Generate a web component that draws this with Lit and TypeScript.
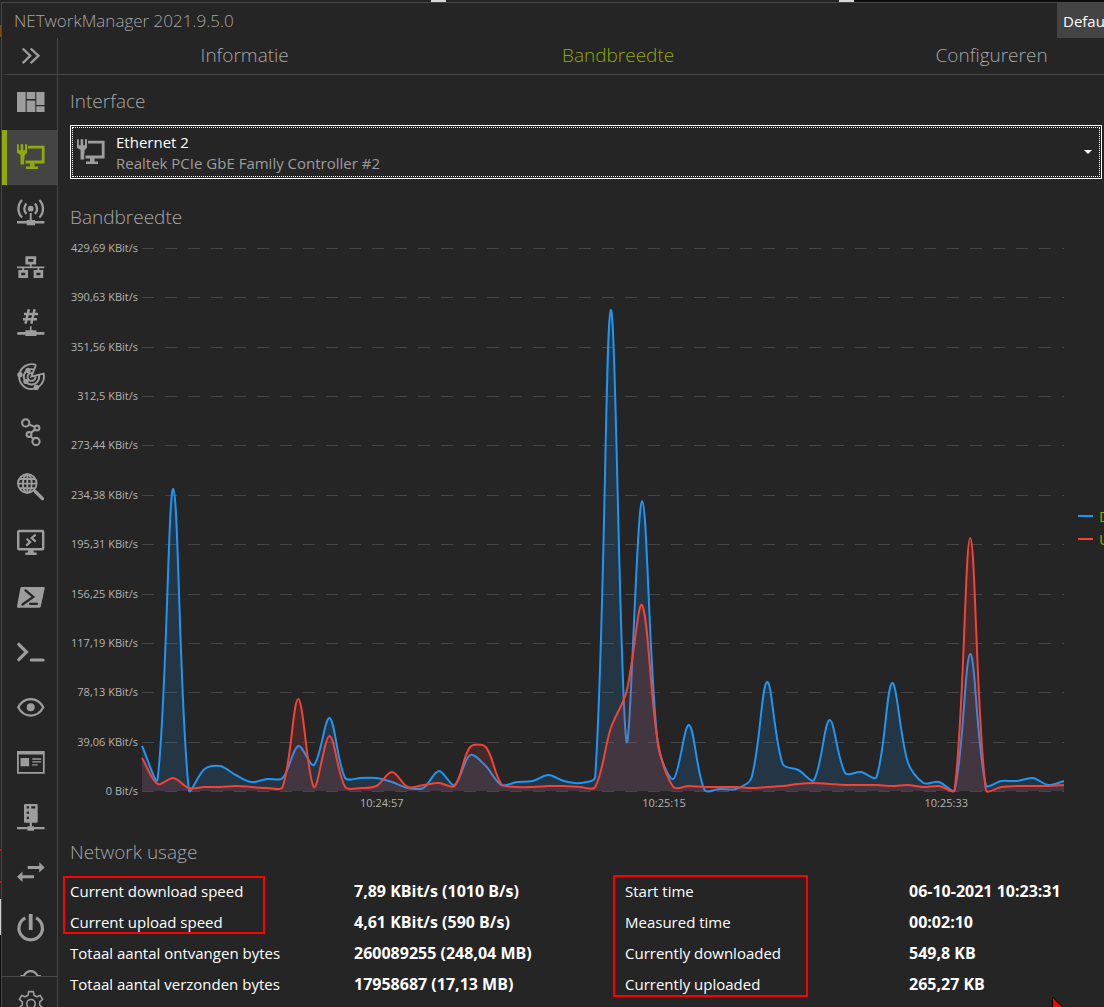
import { LitElement, html, css, svg, SVGTemplateResult } from "lit";
import { customElement, property } from "lit/decorators.js";

type Point = [number, number];

const PLOT_WIDTH = 922;
const PLOT_HEIGHT = 543;
const GRID_LABELS = [
  "429,69 KBit/s", "390,63 KBit/s", "351,56 KBit/s", "312,5 KBit/s",
  "273,44 KBit/s", "234,38 KBit/s", "195,31 KBit/s", "156,25 KBit/s",
  "117,19 KBit/s", "78,13 KBit/s", "39,06 KBit/s", "0 Bit/s",
];
const TIME_LABELS = ["10:24:57", "10:25:15", "10:25:33"];

// Samples, as height above the baseline in plot units.
const DOWNLOAD = [
  45, 12, 302, 1, 22, 25, 16, 9, 12, 13, 45, 26, 73, 13, 13, 13, 9, 3, 3, 20,
  6, 36, 25, 6, 9, 10, 16, 10, 8, 14, 481, 50, 290, 48, 12, 66, 1, 2, 2, 13,
  109, 27, 21, 11, 71, 18, 19, 14, 108, 29, 8, 9, 1, 137, 6, 10, 10, 13, 6, 10,
];
const UPLOAD = [
  33, 7, 13, 3, 4, 4, 5, 4, 3, 4, 92, 4, 55, 4, 3, 5, 19, 4, 6, 8,
  5, 44, 44, 7, 4, 4, 5, 5, 4, 4, 63, 99, 186, 50, 4, 5, 4, 4, 4, 3,
  4, 5, 7, 8, 7, 6, 6, 6, 5, 6, 4, 5, 1, 253, 1, 4, 5, 5, 5, 6,
];

function toPoints(values: number[]): Point[] {
  const step = PLOT_WIDTH / (values.length - 1);
  return values.map((v, i) => [i * step, PLOT_HEIGHT - v]);
}

// Smooth line through all points; handles follow the neighbouring segments.
function smoothPath(points: Point[], smoothness = 0.65): string {
  const at = (i: number) => points[Math.max(0, Math.min(points.length - 1, i))];
  const mid = (a: Point, b: Point): Point => [(a[0] + b[0]) / 2, (a[1] + b[1]) / 2];
  const dist = (a: Point, b: Point) => Math.hypot(b[0] - a[0], b[1] - a[1]);
  let d = `M${points[0][0]},${points[0][1]}`;
  for (let i = 0; i < points.length - 1; i++) {
    const p0 = at(i - 1), p1 = at(i), p2 = at(i + 1), p3 = at(i + 2);
    const c1 = mid(p0, p1), c2 = mid(p1, p2), c3 = mid(p2, p3);
    const l1 = dist(p0, p1), l2 = dist(p1, p2), l3 = dist(p2, p3);
    const k1 = l1 / (l1 + l2), k2 = l2 / (l2 + l3);
    const handle = (p: Point, a: Point, b: Point, k: number): Point => {
      const m: Point = [a[0] + (b[0] - a[0]) * k, a[1] + (b[1] - a[1]) * k];
      return [p[0] + (c2[0] - m[0]) * smoothness, p[1] + (c2[1] - m[1]) * smoothness];
    };
    const h1 = handle(p1, c1, c2, k1);
    const h2 = handle(p2, c2, c3, k2);
    d += ` C${[...h1, ...h2, ...p2].map((n) => n.toFixed(2)).join(",")}`;
  }
  return d;
}

const ETHERNET = svg`
  <path class="f" d="M0 1.3h1.8v6h1.8v-6h2.6v6h1.8v-6h2v8.5l-2.4 2.4v3H4.200v-3L0 9.700z M3.500 12h3.700v9.500H3.500z"/>
  <path class="s" stroke-width="2.8" d="M11 4.200H26.200V19H8.500"/>
  <path class="f" d="M13 20h4.500v3.600H21V26H9v-2.400h4z"/>`;

const ICONS: Record<string, SVGTemplateResult> = {
  Dashboard: svg`<path class="f" d="M0 4h8.700v20H0z M9.700 4h8.600v7H9.700z M9.700 12.500h8.600V24H9.700z M19.300 4h8.200v13h-8.200z M19.300 18.200h8.200V24h-8.200z"/>`,
  Netwerkinterface: ETHERNET,
  WiFi: svg`
    <circle class="f" cx="13.700" cy="10.700" r="2.900"/>
    <path class="s" stroke-width="2.300" d="M9.500 5.600a7 7 0 0 0 0 10.200M17.900 5.600a7 7 0 0 1 0 10.200M5 2a12.500 12.500 0 0 0 0 17.500M22.400 2a12.500 12.500 0 0 1 0 17.500"/>
    <path class="f" d="M12.700 15h2v7H18v1h9.400v2.600H18v1.700H9.700v-1.700H0V23h9.700v-1h3z"/>`,
  "IP-scanner": svg`
    <path class="s" stroke-width="2.800" d="M9.800 4.600h8v5.600h-8z M2.800 18.400h6.800v5.300H2.800z M18 18.400h6.800v5.300H18z"/>
    <path class="s" stroke-width="1.900" d="M13.700 11v3.400M0 14.400h27.400M6.200 14.400v3M21.400 14.400v3"/>`,
  Poortscanner: svg`
    <path class="s" stroke-width="2.500" d="M11.800 1.200 8.500 15.800M17.600 1.200l-3.300 14.600M7 6h14M6 11.200h14"/>
    <path class="f" d="M12.900 18.200h1.700v4.100h4.800v1.800h8v2.700h-8V28H8.300v-1.200H.300v-2.700h8v-1.800h4.600z"/>`,
  Traceroute: svg`
    <path class="s" stroke-width="1.900" d="M19 2a12.400 12.400 0 1 0 7.600 8.600L14.300 13.700 19 2M17.300 6.700A7.700 7.700 0 1 0 22 12.200M16 10.200a4 4 0 1 0 2.400 2.800"/>
    <g class="f"><circle cx="3" cy="11.700" r="2.700"/><circle cx="11" cy="7.500" r="2.700"/><circle cx="9" cy="18.400" r="2.700"/><circle cx="19.300" cy="24.500" r="2.700"/></g>`,
  "DNS-opzoeking": svg`
    <g class="s" stroke-width="2.100"><circle cx="8.700" cy="4.900" r="3.600"/><circle cx="20" cy="10" r="2.400"/><circle cx="12" cy="16.500" r="2.400"/><circle cx="19" cy="23.500" r="3.600"/>
    <path d="M12 6.400l5.600 2.500M18 11.600l-4.200 3.300M13.700 18.500l2.800 2.600"/></g>`,
  "Netwerk zoeken": svg`
    <g class="s" stroke-width="1.900"><circle cx="10.300" cy="10.600" r="9.300"/><ellipse cx="10.300" cy="10.600" rx="4.400" ry="9.300"/>
    <path d="M10.300 1.300v18.600M2.300 6h16M1 10.600h18.600M2.300 15.200h16"/></g>
    <path class="s" stroke-width="3.300" stroke-linecap="round" d="M18.300 18.500l7.200 7.200"/>`,
  "Extern bureaublad": svg`
    <rect class="s" x="1.200" y="3" width="25" height="18.300" rx="1" stroke-width="2.400"/>
    <path class="f" d="M11 22h5.700v2.500h3V27H8.300v-2.500H11z"/>
    <path class="s" stroke-width="2.200" d="M9.600 10.800l3.600 3.300-4 3.500M18.700 6.700l-4 3.300 4 3.600"/>`,
  PowerShell: svg`
    <path class="f" d="M4.700 4h22c.800 0 1.200.500 1 1.200L23.800 23.600c-.200.700-.700 1.100-1.400 1.100H.9c-.700 0-1.100-.500-.900-1.200L3.400 5.100c.2-.7.700-1.100 1.300-1.100z"/>
    <path class="cut" d="M8.500 7.300l7.800 6.700L5.500 21.500M13 20.800h7"/>`,
  PuTTY: svg`<path class="s" stroke-width="3.200" stroke-linecap="round" d="M1.800 6.300l7.700 7.700-7.700 7.700M14.300 22h11.800"/>`,
  "Externe weergave": svg`
    <path class="s" stroke-width="2.200" d="M1.200 14.300C4 9 8.500 6.200 13.700 6.200S23.500 9 26.300 14.300C23.500 19.700 19 22.600 13.700 22.600S4 19.700 1.200 14.300z"/>
    <circle class="f" cx="13.700" cy="14.300" r="4"/>`,
  SNMP: svg`
    <path class="f" fill-rule="evenodd" d="M0 3h27.700v22.800H0z M1.800 6.600v17.300h24.100V6.600z"/>
    <path class="f" d="M3.500 10h8.600v8.300H3.500z"/>
    <path class="s" stroke-width="1.300" d="M15.200 11h9M15.200 13.900h9M15.200 16.800h5.500"/>`,
  Server: svg`
    <path class="f" fill-rule="evenodd" d="M7 2.200Q7 1 8.200 1h11.300q1.200 0 1.200 1.200v16.300q0 1.200-1.200 1.200H8.200Q7 19.700 7 18.500z M9.700 3.300v2.300H12V3.300z M14.300 3.300v2.300h4V3.300z M9.700 8.500v2.300H12V8.500z M9.700 13.800V16H12v-2.200z"/>
    <path class="f" d="M12.700 19h2.200v4.300H17v.700h10.500v2.300H17v1.500h-6.500v-1.500H0V24h10.500v-.700h2.200z"/>`,
  Verbindingen: svg`
    <path class="f" d="M10.700 8h11.500V4.200l5.500 5.200-5.500 5.200v-3.600H10.700z M17 17.300H5.500v-3.800L0 18.700l5.500 5.200v-3.600H17z"/>`,
  "Wake on LAN": svg`
    <path class="s" stroke-width="3.200" d="M8.300 4.800a11.700 11.700 0 1 0 10.800 0"/>
    <path class="s" stroke-width="3.800" d="M13.700 1v16"/>`,
  Whois: svg`<path class="s" stroke-width="2.200" d="M3.500 8.200h3.200Q9 3.200 13.700 3.200T20.700 8.200h3.200"/>`,
  Instellingen: svg`
    <path class="s" stroke-width="1.600" stroke-linejoin="round" d="M11.600 1.600h4.800l.6 3.700 2.700 1.500 3.500-1.400 2.400 4.100-2.900 2.400v3.200l2.900 2.400-2.400 4.100-3.500-1.400-2.700 1.600-.6 3.600h-4.800l-.6-3.600-2.700-1.600-3.500 1.400-2.400-4.100 2.900-2.400v-3.200L2.400 9.500l2.400-4.100 3.500 1.400L11 5.300z"/>
    <circle class="s" cx="14" cy="13.800" r="4.300" stroke-width="1.600"/>`,
};

const iconStyles = css`
  .icon {
    display: block;
    width: 28px;
    height: 28px;
    overflow: visible;
  }
  .f {
    fill: currentColor;
  }
  .s {
    fill: none;
    stroke: currentColor;
  }
  .cut {
    fill: none;
    stroke: #252525;
    stroke-width: 2.200;
    stroke-linecap: round;
  }
`;

@customElement("tool-sidebar")
class ToolSidebar extends LitElement {
  @property() selected = "Netwerkinterface";

  static styles = [
    iconStyles,
    css`
      :host {
        display: flex;
        flex-direction: column;
        min-height: 0;
        border-right: 1px solid #484848;
      }
      button {
        display: block;
        box-sizing: border-box;
        width: 55px;
        height: 55px;
        margin: 0;
        padding: 13px 12px 14px 10px;
        border: 0;
        border-left: 5px solid transparent;
        background: none;
        color: #9d9d9d;
      }
      .expand {
        height: 37px;
        flex: none;
        padding: 4px 12px 4px 10px;
        border-bottom: 1px solid #484848;
      }
      .selected {
        border-left-color: #90a90f;
        background: #444444;
        color: #90a90f;
      }
      .tools {
        flex: 1;
        min-height: 0;
        overflow: hidden;
      }
      .footer {
        flex: none;
        height: 30px;
        overflow: hidden;
        border-top: 1px solid #484848;
      }
    `,
  ];

  render() {
    const item = (name: string) => html`
      <button
        class=${name === this.selected ? "selected" : ""}
        aria-label=${name}
        @click=${() => (this.selected = name)}
      >
        <svg class="icon" viewBox="0 0 28 28" aria-hidden="true">${ICONS[name]}</svg>
      </button>
    `;
    return html`
      <button class="expand" aria-label="Menu uitklappen">
        <svg class="icon" viewBox="0 0 28 28" aria-hidden="true">
          <path class="s" stroke-width="2.300" d="M5.700 6.500l7.500 7.300-7.500 7.300M13.700 6.500l7.800 7.300-7.800 7.300" />
        </svg>
      </button>
      <nav class="tools">
        ${Object.keys(ICONS).filter((n) => n !== "Instellingen").map(item)}
      </nav>
      <div class="footer">${item("Instellingen")}</div>
    `;
  }
}

@customElement("bandwidth-chart")
class BandwidthChart extends LitElement {
  static styles = css`
    :host {
      display: grid;
      grid-template-columns: 68px minmax(0, 1fr) 26px;
      grid-template-rows: minmax(0, 1fr) 16px;
      row-gap: 4px;
      font-size: 11px;
      line-height: 16px;
      color: #b4b4b4;
    }
    .values {
      display: flex;
      flex-direction: column;
      justify-content: space-between;
      align-items: flex-end;
      margin: -8px 0;
      white-space: nowrap;
    }
    .plot {
      display: block;
      width: 100%;
      height: 100%;
      overflow: visible;
    }
    .frame {
      min-height: 0;
      padding: 0 14px 0 4px;
    }
    .times {
      grid-column: 2;
      display: flex;
      justify-content: space-between;
      padding: 0 110px 0 222px;
    }
    .gridline {
      stroke: #464646;
      stroke-dasharray: 12 11;
    }
    .line {
      fill: none;
      stroke-width: 2;
    }
    .area {
      opacity: 0.15;
    }
    .legend {
      grid-column: 3;
      grid-row: 1 / 3;
      align-self: center;
      padding: 0 0 4px;
      margin: 0;
      list-style: none;
      font-size: 15px;
      line-height: 23px;
      color: #90a90f;
    }
    .key {
      display: flex;
      align-items: center;
      gap: 6px;
    }
    .mark {
      flex: none;
      width: 15px;
      height: 2px;
    }
    .down {
      background: #2195f2;
    }
    .up {
      background: #f34336;
    }
  `;

  private series(values: number[], color: string) {
    const line = smoothPath(toPoints(values));
    return svg`
      <path class="area" fill=${color} d="${line} L${PLOT_WIDTH},${PLOT_HEIGHT} L0,${PLOT_HEIGHT} Z"/>
      <path class="line" stroke=${color} d=${line} vector-effect="non-scaling-stroke"/>`;
  }

  render() {
    return html`
      <div class="values">${GRID_LABELS.map((l) => html`<span>${l}</span>`)}</div>
      <div class="frame">
        <svg
          class="plot"
          viewBox="0 0 ${PLOT_WIDTH} ${PLOT_HEIGHT}"
          preserveAspectRatio="none"
          role="img"
          aria-label="Bandbreedte"
        >
          ${GRID_LABELS.map((_, i) => {
            const y = Math.round((i * PLOT_HEIGHT) / (GRID_LABELS.length - 1)) + 0.5;
            return svg`<line class="gridline" x1="0" x2=${PLOT_WIDTH} y1=${y} y2=${y} vector-effect="non-scaling-stroke"/>`;
          })}
          ${this.series(DOWNLOAD, "#2195f2")} ${this.series(UPLOAD, "#f34336")}
        </svg>
      </div>
      <div class="times">${TIME_LABELS.map((t) => html`<span>${t}</span>`)}</div>
      <ul class="legend">
        <li class="key"><span class="mark down"></span>Download</li>
        <li class="key"><span class="mark up"></span>Upload</li>
      </ul>
    `;
  }
}

@customElement("app-root")
class AppRoot extends LitElement {
  static styles = [
    iconStyles,
    css`
      :host {
        display: block;
        box-sizing: border-box;
        height: 100vh;
        min-height: 640px;
        overflow: hidden;
        position: relative;
        padding: 2px 0 0 1px;
        font-family: "Segoe UI", "Open Sans", "Noto Sans", sans-serif;
        font-size: 15px;
        color: #ffffff;
        background:
          linear-gradient(#d8d8d8, #d8d8d8) 431px 0 / 15px 2px no-repeat,
          linear-gradient(#d8d8d8, #d8d8d8) 839px 0 / 15px 2px no-repeat,
          linear-gradient(#0c0c0c, #0c0c0c) 854px 0 / 100% 2px no-repeat,
          linear-gradient(#7a5018, #7a5018) 0 25px / 1px 12px no-repeat,
          linear-gradient(#d01010, #d01010) 0 849px / 1px 2px no-repeat,
          linear-gradient(#d01010, #d01010) 0 881px / 1px 2px no-repeat,
          linear-gradient(#d0d0d0, #d0d0d0) 0 899px / 1px 36px no-repeat,
          linear-gradient(#0c0c0c, #0c0c0c) 0 935px / 1px 100% no-repeat,
          #242424;
      }
      .window {
        display: grid;
        grid-template-columns: auto minmax(0, 1fr);
        grid-template-rows: 35px minmax(0, 1fr);
        box-sizing: border-box;
        height: 100%;
        border: 1px solid #484848;
        border-width: 1px 0 0 1px;
        background: #252525;
      }
      .titlebar {
        grid-column: 1 / 3;
        display: flex;
        justify-content: space-between;
        align-items: center;
        padding-left: 12px;
      }
      .title {
        margin: 0;
        font-size: 17px;
        font-weight: 300;
        line-height: 24px;
        color: #a6a6a6;
      }
      .profile {
        width: 47px;
        height: 100%;
        padding: 0 0 0 6px;
        border: 0;
        overflow: hidden;
        background: #444444;
        font: inherit;
        text-align: left;
        color: #ffffff;
      }
      .main {
        display: flex;
        flex-direction: column;
        min-width: 0;
        min-height: 0;
        overflow: hidden;
      }
      .tabs {
        display: flex;
        flex: none;
        height: 36px;
        border-bottom: 1px solid #484848;
      }
      .tab {
        flex: 0 0 35.7%;
        border: 0;
        padding: 0 0 2px;
        background: none;
        font: inherit;
        font-size: 19px;
        font-weight: 300;
        color: #a6a6a6;
      }
      .current {
        color: #90a90f;
      }
      .content {
        display: flex;
        flex: 1;
        flex-direction: column;
        min-height: 0;
        padding: 12px 0 7px 12px;
      }
      h2 {
        margin: 0;
        font-size: 19px;
        font-weight: 300;
        line-height: 28px;
        color: #a6a6a6;
      }
      .combo {
        display: grid;
        flex: none;
        grid-template-columns: 46px 1fr 18px;
        grid-template-rows: 54px;
        margin: 10px 2px 24px 0;
      }
      .adapter {
        grid-area: 1 / 1 / 2 / 4;
        appearance: none;
        box-sizing: border-box;
        margin: 0;
        padding: 0 20px 20px 45px;
        border: 1px solid #ffffff;
        border-radius: 0;
        outline: 1px dotted #ffffff;
        outline-offset: -3px;
        background: #252525;
        font: inherit;
        color: #ffffff;
      }
      .adapter-icon {
        grid-area: 1 / 1;
        padding: 13px 0 0 7px;
        color: #9d9d9d;
        pointer-events: none;
      }
      .adapter-text {
        grid-area: 1 / 2;
        padding-top: 28px;
        line-height: 20px;
        color: #9d9d9d;
        pointer-events: none;
      }
      .arrow {
        grid-area: 1 / 3;
        align-self: center;
        width: 8px;
        height: 4px;
        pointer-events: none;
      }
      .chart {
        flex: 1;
        min-height: 0;
        margin: 17px 0 27px;
      }
      .usage {
        display: grid;
        flex: none;
        grid-template-columns: 284fr 271fr 284fr 195fr;
        margin: 10px 0 0;
        line-height: 31px;
        white-space: nowrap;
      }
      .usage dt {
        position: relative;
      }
      .usage dd {
        margin: 0;
        font-size: 16px;
        font-weight: 700;
      }
      .mark {
        position: absolute;
        box-sizing: border-box;
        border: 2px solid #ff0000;
        pointer-events: none;
      }
      .speeds {
        left: -7px;
        top: 0;
        width: 202px;
        height: 58px;
      }
      .totals {
        left: -12px;
        top: -1px;
        width: 195px;
        height: 122px;
      }
      .pointer {
        position: absolute;
        left: 1052px;
        bottom: 0;
        width: 12px;
        height: 10px;
      }
    `,
  ];

  private tabs = ["Informatie", "Bandbreedte", "Configureren"];

  private usage = [
    ["Current download speed", "7,89 KBit/s (1010 B/s)", "Start time", "06-10-2021 10:23:31"],
    ["Current upload speed", "4,61 KBit/s (590 B/s)", "Measured time", "00:02:10"],
    ["Totaal aantal ontvangen bytes", "260089255 (248,04 MB)", "Currently downloaded", "549,8 KB"],
    ["Totaal aantal verzonden bytes", "17958687 (17,13 MB)", "Currently uploaded", "265,27 KB"],
  ];

  render() {
    return html`
      <div class="window">
        <header class="titlebar">
          <h1 class="title">NETworkManager 2021.9.5.0</h1>
          <button class="profile">Default</button>
        </header>
        <tool-sidebar></tool-sidebar>
        <main class="main">
          <div class="tabs" role="tablist">
            ${this.tabs.map(
              (t) => html`<button
                class="tab ${t === "Bandbreedte" ? "current" : ""}"
                role="tab"
                aria-selected=${t === "Bandbreedte"}
              >${t}</button>`,
            )}
          </div>
          <div class="content">
            <h2><label for="adapter">Interface</label></h2>
            <div class="combo">
              <select id="adapter" class="adapter">
                <option>Ethernet 2</option>
              </select>
              <div class="adapter-icon">
                <svg class="icon" viewBox="0 0 28 28" aria-hidden="true">${ETHERNET}</svg>
              </div>
              <div class="adapter-text">Realtek PCIe GbE Family Controller #2</div>
              <svg class="arrow" viewBox="0 0 8 4" aria-hidden="true">
                <path fill="#ffffff" d="M0 0h8L4 4z" />
              </svg>
            </div>
            <h2>Bandbreedte</h2>
            <bandwidth-chart class="chart"></bandwidth-chart>
            <h2>Network usage</h2>
            <dl class="usage">
              ${this.usage.map(
                ([a, b, c, d], row) => html`
                  <dt>${a}${row === 0 ? html`<span class="mark speeds"></span>` : ""}</dt>
                  <dd>${b}</dd>
                  <dt>${c}${row === 0 ? html`<span class="mark totals"></span>` : ""}</dt>
                  <dd>${d}</dd>
                `,
              )}
            </dl>
          </div>
        </main>
      </div>
      <svg class="pointer" viewBox="0 0 12 10" aria-hidden="true">
        <path fill="#ff0000" stroke="#000000" d="M.500 0v12h12z" />
      </svg>
    `;
  }
}
